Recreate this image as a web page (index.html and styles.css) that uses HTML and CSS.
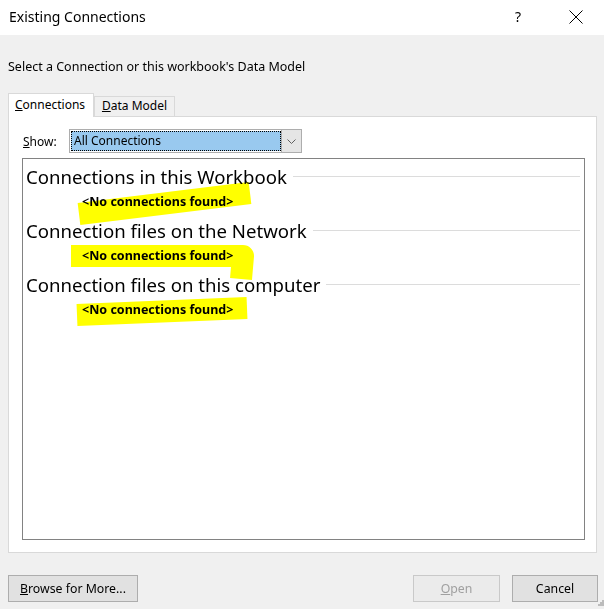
FILE: index.html
```html
<!DOCTYPE html>
<html>
<head>
<meta charset="utf-8">
<link rel="stylesheet" href="styles.css">
</head>
<body>
<div class="dialog">
  <div class="titlebar">
    <span class="title">Existing Connections</span>
    <span class="help">?</span>
    <svg class="close" width="14" height="14" viewBox="0 0 14 14"><path d="M0.5 0.5 L13.5 13.5 M13.5 0.5 L0.5 13.5" stroke="#000" stroke-width="1" fill="none"/></svg>
  </div>
  <div class="main">
    <div class="prompt">Select a Connection or this workbook's Data Model</div>
    <div class="tabs">
      <div class="tab active"><u>C</u>onnections</div>
      <div class="tab"><u>D</u>ata Model</div>
    </div>
    <div class="panel">
      <div class="show-row">
        <span class="show-label"><u>S</u>how:</span>
        <div class="combo">
          <div class="combo-value">All Connections</div>
          <div class="combo-btn">
            <svg width="9" height="5" viewBox="0 0 9 5"><path d="M0.5 0.5 L4.5 4.5 L8.5 0.5" stroke="#606060" stroke-width="1" fill="none"/></svg>
          </div>
        </div>
      </div>
      <div class="list">
        <div class="group">
          <div class="heading"><span>Connections in this Workbook</span></div>
          <div class="empty">&lt;No connections found&gt;</div>
        </div>
        <div class="group">
          <div class="heading"><span>Connection files on the Network</span></div>
          <div class="empty">&lt;No connections found&gt;</div>
        </div>
        <div class="group">
          <div class="heading"><span>Connection files on this computer</span></div>
          <div class="empty">&lt;No connections found&gt;</div>
        </div>
      </div>
    </div>
    <div class="footer">
      <button class="btn browse"><u>B</u>rowse for More...</button>
      <div class="spacer"></div>
      <button class="btn open" disabled><u>O</u>pen</button>
      <button class="btn cancel">Cancel</button>
    </div>
  </div>
  <svg class="grip" width="6" height="6" viewBox="0 0 6 6"><rect x="4" y="0" width="2" height="2" fill="#bcbcbc"/><rect x="2" y="2" width="2" height="2" fill="#bcbcbc"/><rect x="4" y="2" width="2" height="2" fill="#bcbcbc"/><rect x="0" y="4" width="2" height="2" fill="#bcbcbc"/><rect x="2" y="4" width="2" height="2" fill="#bcbcbc"/><rect x="4" y="4" width="2" height="2" fill="#bcbcbc"/></svg>
  <svg class="marker" width="604" height="609" viewBox="0 0 604 609">
    <g stroke="#ffff00" stroke-width="22" fill="none" stroke-linejoin="round">
      <path d="M79 214 L250 193"/>
      <path d="M71 256 L243 256 L241 279"/>
      <path d="M77 315 L247 308"/>
    </g>
  </svg>
</div>
</body>
</html>
```

FILE: styles.css
```css
* { box-sizing: border-box; }
html, body { margin: 0; padding: 0; }
body {
  width: 604px;
  height: 609px;
  overflow: hidden;
  background: #f0f0f0;
  font-family: "Noto Sans", "Open Sans", sans-serif;
  color: #000;
}
.dialog {
  position: relative;
  width: 604px;
  height: 609px;
}
.titlebar {
  height: 35px;
  background: #fff;
  display: flex;
  align-items: center;
  padding-left: 9px;
}
.title {
  font-size: 14px;
  flex: 1;
  margin-top: -2px;
}
.help {
  font-size: 14px;
  width: 14px;
  margin-right: 40px;
  margin-top: -2px;
}
.close {
  margin-right: 21px;
  margin-top: -2px;
}
.main {
  padding: 0 7px 0 8px;
}
.prompt {
  margin-top: 23px;
  height: 18px;
  line-height: 18px;
  font-size: 12.5px;
}
.tabs {
  margin-top: 17px;
  display: flex;
  align-items: flex-end;
  height: 23px;
  position: relative;
  z-index: 1;
}
.tab {
  font-size: 12px;
  height: 20px;
  line-height: 18px;
  padding: 0 5px;
  border: 1px solid #d9d9d9;
  border-bottom: none;
  background: #f0f0f0;
  width: 81px;
  text-align: center;
}
.tab.active {
  height: 24px;
  margin-bottom: -1px;
  background: #fff;
  width: 86px;
  line-height: 21px;
  text-align: left;
  padding-left: 6px;
}
.panel {
  height: 437px;
  background: #fff;
  border: 1px solid #d9d9d9;
  padding: 12px 11px 0 13px;
}
.show-row {
  display: flex;
  align-items: center;
  height: 24px;
}
.show-label {
  font-size: 12px;
  width: 47px;
  padding-left: 1px;
}
.combo {
  display: flex;
  width: 233px;
  height: 24px;
  border: 1px solid #adadad;
  background: #fff;
  padding: 1px;
}
.combo-value {
  flex: 1;
  background: #99c9ef;
  border: 1px dotted #000;
  font-size: 12px;
  line-height: 18px;
  padding-left: 2px;
}
.combo-btn {
  width: 21px;
  margin: -2px -2px -2px 0;
  border: 1px solid #adadad;
  background: #e5e5e5;
  display: flex;
  align-items: center;
  justify-content: center;
}
.list {
  margin-top: 5px;
  height: 382px;
  border: 1px solid #828282;
  background: #fff;
  padding: 5px 4px 0 3px;
}
.group {
  height: 54px;
}
.heading {
  display: flex;
  align-items: center;
  height: 26px;
  line-height: 26px;
  font-size: 18.6px;
  white-space: nowrap;
}
.heading::after {
  content: "";
  flex: 1;
  border-top: 1px solid #dcdcdc;
  margin-left: 6px;
  margin-top: -2px;
}
.empty {
  font-size: 12.5px;
  font-weight: bold;
  line-height: 20px;
  height: 22px;
  padding-top: 2px;
  padding-left: 56px;
}
.footer {
  margin-top: 22px;
  display: flex;
  align-items: center;
}
.spacer { flex: 1; }
.btn {
  height: 27px;
  font-family: "Noto Sans", "Open Sans", sans-serif;
  font-size: 12.3px;
  color: #000;
  background: #e1e1e1;
  border: 1px solid #adadad;
  padding: 0;
  margin: 0;
}
.browse { width: 130px; }
.open {
  width: 87px;
  background: #ebebeb;
  border-color: #c9c9c9;
  color: #a0a0a0;
  margin-right: 12px;
}
.cancel { width: 86px; margin-right: -1px; }
.grip {
  position: absolute;
  right: 0;
  bottom: 3px;
}
.marker {
  position: absolute;
  left: 0;
  top: 0;
  pointer-events: none;
  mix-blend-mode: multiply;
}
```
